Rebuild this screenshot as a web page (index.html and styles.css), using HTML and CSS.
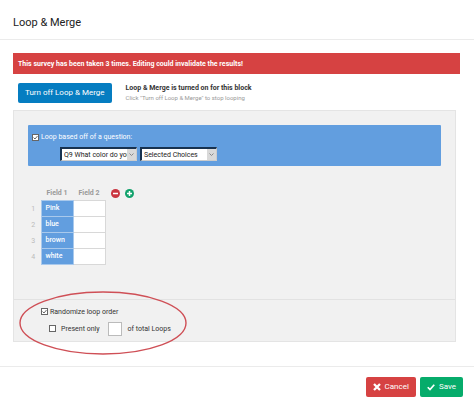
FILE: index.html
```html
<!DOCTYPE html>
<html lang="en">
<head>
<meta charset="utf-8">
<title>Loop &amp; Merge</title>
<link rel="stylesheet" href="styles.css">
</head>
<body>
<header class="header"><h1>Loop &amp; Merge</h1></header>
<main class="body">
  <div class="alert" role="alert">This survey has been taken 3 times. Editing could invalidate the results!</div>
  <div class="status">
    <button type="button" class="btn btn-toggle">Turn off Loop &amp; Merge</button>
    <div>
      <p class="status-title">Loop &amp; Merge is turned on for this block</p>
      <p class="status-hint">Click "Turn off Loop &amp; Merge" to stop looping</p>
    </div>
  </div>
  <section class="panel">
    <div class="question">
      <label class="check-row"><input type="checkbox" checked>Loop based off of a question:</label>
      <div class="selects">
        <select aria-label="Question"><option>Q9 What color do you like</option></select>
        <select aria-label="Choices"><option>Selected Choices</option></select>
      </div>
    </div>
    <div class="fields">
      <table>
        <thead><tr><td></td><th scope="col">Field 1</th><th scope="col">Field 2</th></tr></thead>
        <tbody>
          <tr><th scope="row">1</th><td class="name">Pink</td><td class="blank"></td></tr>
          <tr><th scope="row">2</th><td class="name">blue</td><td class="blank"></td></tr>
          <tr><th scope="row">3</th><td class="name">brown</td><td class="blank"></td></tr>
          <tr><th scope="row">4</th><td class="name">white</td><td class="blank"></td></tr>
        </tbody>
      </table>
      <button type="button" class="round" aria-label="Remove field"><svg viewBox="0 0 18 18"><circle cx="9" cy="9" r="9" fill="#ca3540"/><path d="M4 9h10" stroke="#fff" stroke-width="3"/></svg></button>
      <button type="button" class="round" aria-label="Add field"><svg viewBox="0 0 18 18"><circle cx="9" cy="9" r="9" fill="#12a26c"/><path d="M4 9h10M9 4v10" stroke="#fff" stroke-width="3"/></svg></button>
    </div>
    <div class="options">
      <label class="check-row"><input type="checkbox" checked>Randomize loop order</label>
      <div class="present">
        <input type="checkbox" id="present">
        <label for="present">Present only</label>
        <input type="text" class="count" aria-label="Number of loops">
        <span>of total Loops</span>
      </div>
      <svg class="ring" viewBox="0 0 168 64" aria-hidden="true"><ellipse cx="84" cy="32" rx="83" ry="31" fill="none" stroke="#cf4f56" stroke-width="1.4"/></svg>
    </div>
  </section>
</main>
<footer class="footer">
  <button type="button" class="btn btn-cancel"><svg viewBox="0 0 16 16"><path d="M2 2l12 12M14 2L2 14" stroke="#fff" stroke-width="4.600"/></svg>Cancel</button>
  <button type="button" class="btn btn-save"><svg viewBox="0 0 16 16"><path d="M1.500 8.500l4.500 4.500L14.500 3.500" fill="none" stroke="#fff" stroke-width="3.400"/></svg>Save</button>
</footer>
</body>
</html>
```
FILE: styles.css
```css
* { box-sizing: border-box; }
body {
  margin: 0;
  background: #fff;
  color: #333;
  font: 7px/10px Roboto, "Liberation Sans", sans-serif;
}
h1, p { margin: 0; }
button, input, select { font: inherit; }

.header {
  padding: 13px 13px 6px;
  border-bottom: 1px solid #ebebeb;
}
h1 {
  color: #222;
  font-size: 11px;
  font-weight: 400;
  line-height: 20px;
}

.body { padding: 13px 14px 24px 13px; }
.alert {
  padding: 6px 5px 5px;
  background: #d64242;
  color: #fff;
  font-weight: 700;
}
.status {
  display: flex;
  align-items: center;
  gap: 14px;
  padding: 9px 5px 7px;
}
.status-title { color: #333; font-weight: 700; }
.status-hint { color: #999; font-size: 6px; }

.btn {
  display: flex;
  align-items: center;
  justify-content: center;
  gap: 4px;
  height: 20px;
  padding: 0 7px;
  border: 0;
  border-radius: 2px;
  color: #fff;
  font-size: 8px;
  white-space: nowrap;
}
.btn svg { width: 8px; height: 8px; }
.btn-toggle { background: #057dc1; }
.btn-cancel { background: #d64242; }
.btn-save { background: #06ac6b; }

.panel {
  margin-right: 4px;
  padding-top: 14px;
  border: 1px solid #e4e4e4;
  background: #f1f1f1;
}
.question {
  margin: 0 14px;
  padding: 7px 4px 5px;
  border-radius: 1px;
  background: #629edf;
  color: #fff;
}
.check-row { display: flex; align-items: center; gap: 2px; }
.selects {
  display: flex;
  gap: 3px;
  margin: 5px 0 0 28px;
}
select {
  appearance: none;
  width: 77px;
  height: 14px;
  padding: 0 9px 0 2px;
  border: 1px solid #ccc;
  border-top: 2px solid #173250;
  border-left: 2px solid #173250;
  border-radius: 0;
  color: #222;
  text-overflow: clip;
  background:
    url("data:image/svg+xml,%3Csvg xmlns='http://www.w3.org/2000/svg' viewBox='0 0 9 11'%3E%3Cpath fill='%23d9d9d9' d='M0 0h9v11H0z'/%3E%3Cpath d='M2.500 4.500l2 2 2-2' fill='none' stroke='%23888'/%3E%3C/svg%3E") right / 9px 11px no-repeat,
    #fff;
}
input[type="checkbox"] {
  appearance: none;
  flex: none;
  width: 7px;
  height: 7px;
  margin: 0;
  border: 1px solid #666;
  background: #fff;
}
input[type="checkbox"]:checked {
  background: #fff url("data:image/svg+xml,%3Csvg xmlns='http://www.w3.org/2000/svg' viewBox='0 0 5 5'%3E%3Cpath d='M.5 2.500l1.500 1.500L4.500 1' fill='none' stroke='%23444' stroke-width='.8'/%3E%3C/svg%3E");
}

.fields {
  display: flex;
  align-items: flex-start;
  gap: 5px;
  padding: 21px 12px 34px;
}
table { border-collapse: collapse; }
thead th { height: 13px; padding: 0 0 1px; color: #999; }
th, td { padding: 0; }
tbody th { width: 15px; color: #bbb; font-weight: 400; padding-top: 2px; }
tbody td {
  width: 32px;
  height: 16px;
  border: 1px solid #d8d8d8;
}
.name {
  padding: 0 4px;
  border-color: #a9c9ec;
  background: #629edf;
  color: #fff;
  font-weight: 500;
}
.blank { background: #fff; }
.round {
  width: 9px;
  height: 9px;
  margin-top: 2px;
  padding: 0;
  border: 0;
  background: none;
}
.round svg { display: block; }

.options {
  position: relative;
  padding: 7px 27px 5px;
  border-top: 1px solid #e2e2e2;
}
.present {
  display: flex;
  align-items: center;
  gap: 5px;
  margin: 5px 0 0 8px;
}
.count {
  width: 14px;
  height: 14px;
  margin: 0 1px 0 3px;
  padding: 0;
  border: 1px solid #bbb;
  background: #fff;
}
.ring {
  position: absolute;
  top: -9px;
  left: 5px;
  width: 168px;
  height: 64px;
  pointer-events: none;
}

.footer {
  display: flex;
  justify-content: flex-end;
  gap: 4px;
  padding: 10px 11px;
  border-top: 1px solid #ebebeb;
}
```
